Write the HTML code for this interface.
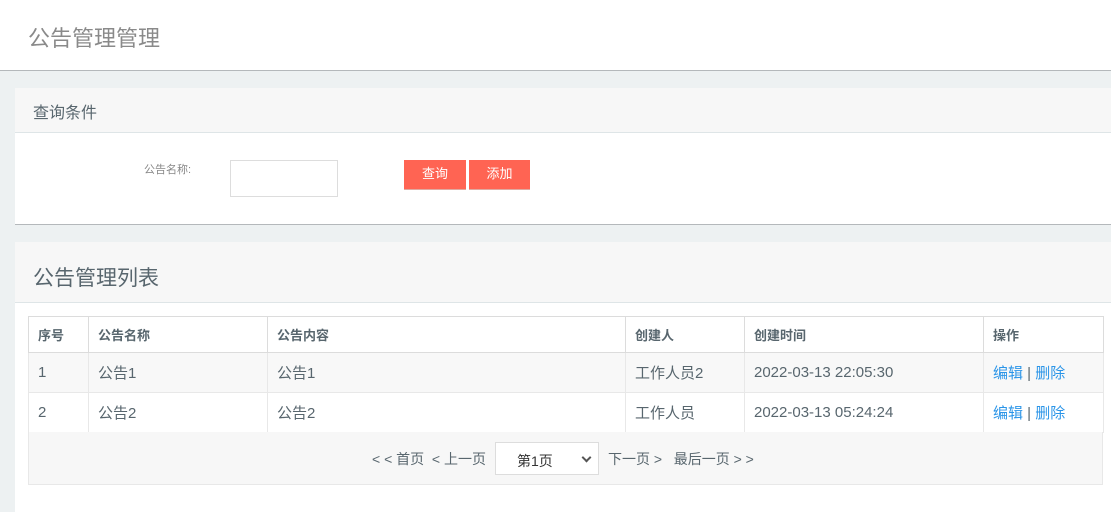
<!DOCTYPE html>
<html><head><meta charset="utf-8">
<style>
*{margin:0;padding:0;box-sizing:border-box}
body{width:1111px;height:512px;overflow:hidden;background:#edf1f2;font-family:"Liberation Sans","Noto Sans CJK SC",sans-serif;color:#58666e;position:relative}
.lb{position:absolute;left:0;top:0;width:3px;height:40px;background:linear-gradient(#6aa8f0,#eaf2fb)}
.top{position:absolute;left:0;top:0;width:1111px;height:71px;background:#fff;border-bottom:1px solid #b4b8bb}
.top h1{position:absolute;left:28px;top:21px;font-size:22px;font-weight:normal;color:#8a8a8a}
.p1{position:absolute;left:15px;top:88px;width:1096px;height:137px;background:#fff;border-bottom:1px solid #b4b8bb}
.ph{height:45px;background:#f7f7f7;border-bottom:1px solid #dee5e7;padding:11px 0 0 18px;font-size:16px;color:#58666e}
.lbl{position:absolute;left:129px;top:73px;font-size:11px;color:#888}
.inp{position:absolute;left:215px;top:72px;width:108px;height:37px;border:1px solid #ddd;background:#fff}
.btn{position:absolute;top:72px;height:29px;width:62px;background:#ff6453;color:#fff;font-size:13px;text-align:center;line-height:28px;box-shadow:0 1px 0 #e0a9a0}
.p2{position:absolute;left:15px;top:242px;width:1096px;height:270px;background:#fff}
.ph2{height:61px;background:#f7f7f7;border-bottom:1px solid #dee5e7;padding:20px 0 0 18px;font-size:21px;color:#58666e}
table{position:absolute;left:13px;top:74px;border-collapse:collapse;width:1076px;font-size:15px}
td,th{border:1px solid #e8e8e8;text-align:left;padding:0 0 0 9px;font-weight:normal}
th{height:36px;font-weight:bold;font-size:13px;border-color:#dcdcdc}
td{height:40px}
tr.g td{background:#f8f8f8}
a{color:#2b95e8;text-decoration:none}
.ft{position:absolute;left:13px;top:190px;width:1075px;height:53px;background:#f7f7f7;border:1px solid #e8e8e8;border-top:none;font-size:14px}
.pg{position:absolute;top:10px;left:343px;display:flex;align-items:center;white-space:pre}
.sel{width:104px;height:33px;border:1px solid #ddd;background:#fff;margin:0 9px;padding:8px 0 0 21px;font-size:14px;position:relative;color:#333}
.sel:after{content:"";position:absolute;right:8px;top:11px;width:5px;height:5px;border-right:2px solid #555;border-bottom:2px solid #555;transform:rotate(45deg)}
</style></head><body>
<div class="lb"></div>
<div class="top"><h1>公告管理管理</h1></div>
<div class="p1">
<div class="ph">查询条件</div>
<div class="lbl">公告名称:</div>
<div class="inp"></div>
<div class="btn" style="left:389px">查询</div>
<div class="btn" style="left:454px;width:61px">添加</div>
</div>
<div class="p2">
<div class="ph2">公告管理列表</div>
<table>
<tr><th style="width:60px">序号</th><th style="width:179px">公告名称</th><th style="width:358px">公告内容</th><th style="width:119px">创建人</th><th style="width:239px">创建时间</th><th>操作</th></tr>
<tr class="g"><td>1</td><td>公告1</td><td>公告1</td><td>工作人员2</td><td>2022-03-13 22:05:30</td><td><a>编辑</a> | <a>删除</a></td></tr>
<tr><td>2</td><td>公告2</td><td>公告2</td><td>工作人员</td><td>2022-03-13 05:24:24</td><td><a>编辑</a> | <a>删除</a></td></tr>
</table>
<div class="ft"><div class="pg"><span>&lt; &lt; 首页  &lt; 上一页</span><div class="sel">第1页</div><span>下一页 &gt;   最后一页 &gt; &gt;</span></div></div>
</div>
</body></html>
